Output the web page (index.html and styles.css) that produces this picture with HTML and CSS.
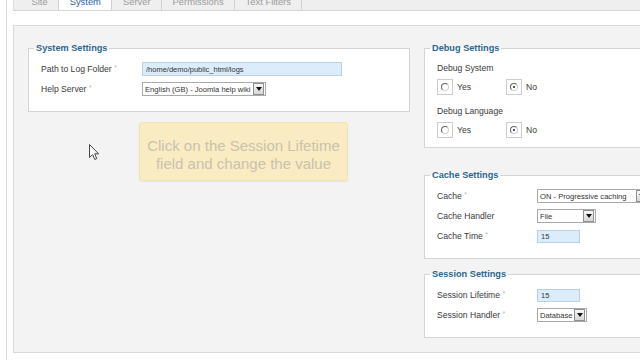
FILE: index.html
```html
<!DOCTYPE html>
<html lang="en">
<head>
  <meta charset="UTF-8">
  <title>Global Configuration - System</title>
  <link rel="stylesheet" href="styles.css">
</head>
<body>
  <div class="page">
    <div class="tabs">
      <span class="tab">Site</span>
      <span class="tab active">System</span>
      <span class="tab">Server</span>
      <span class="tab">Permissions</span>
      <span class="tab">Text Filters</span>
    </div>

    <div class="panel">
      <div class="col">
        <fieldset class="group wide">
          <legend>System Settings</legend>
          <div class="row">
            <label>Path to Log Folder <span class="req">*</span></label>
            <input class="field path" type="text" value="/home/demo/public_html/logs" readonly>
          </div>
          <div class="row">
            <label>Help Server <span class="req">*</span></label>
            <div class="select help"><span class="val">English (GB) - Joomla help wiki</span><span class="arrow"></span></div>
          </div>
        </fieldset>
      </div>

      <div class="col">
        <fieldset class="group debug">
          <legend>Debug Settings</legend>
          <div class="sub">Debug System</div>
          <div class="radios">
            <span class="opt"><span class="box"><span class="radio"></span></span>Yes</span>
            <span class="opt"><span class="box"><span class="radio on"></span></span>No</span>
          </div>
          <div class="sub gap">Debug Language</div>
          <div class="radios">
            <span class="opt"><span class="box"><span class="radio"></span></span>Yes</span>
            <span class="opt"><span class="box"><span class="radio on"></span></span>No</span>
          </div>
        </fieldset>

        <fieldset class="group cache">
          <legend>Cache Settings</legend>
          <div class="row">
            <label>Cache <span class="req">*</span></label>
            <div class="select mode"><span class="val">ON - Progressive caching</span><span class="arrow"></span></div>
          </div>
          <div class="row">
            <label>Cache Handler</label>
            <div class="select file"><span class="val">File</span><span class="arrow"></span></div>
          </div>
          <div class="row">
            <label>Cache Time <span class="req">*</span></label>
            <input class="field short" type="text" value="15" readonly>
          </div>
        </fieldset>

        <fieldset class="group session">
          <legend>Session Settings</legend>
          <div class="row">
            <label>Session Lifetime <span class="req">*</span></label>
            <input class="field short" type="text" value="15" readonly>
          </div>
          <div class="row">
            <label>Session Handler <span class="req">*</span></label>
            <div class="select db"><span class="val">Database</span><span class="arrow"></span></div>
          </div>
        </fieldset>
      </div>

      <div class="tip">Click on the Session Lifetime<br>field and change the value</div>

      <svg class="cursor" width="12" height="18" viewBox="0 0 12 18">
        <path d="M1.5 1.5 L1.5 14.5 L4.6 11.6 L6.8 16.5 L8.8 15.6 L6.7 10.8 L10.6 10.8 Z" fill="#fafafa" stroke="#444" stroke-width="1" stroke-linejoin="round"/>
      </svg>
    </div>
  </div>
</body>
</html>
```

FILE: styles.css
```css
* {
  margin: 0;
  padding: 0;
  box-sizing: border-box;
}

body {
  font-family: 'Liberation Sans', Arial, sans-serif;
  background: #fff;
  color: #3a3a3a;
  width: 640px;
  height: 360px;
  overflow: hidden;
}

.page {
  margin-left: 6px;
  padding-left: 6px;
  border-left: 1px solid #dadada;
  width: 700px;
  height: 380px;
}

/* tabs, cut off at the top of the frame */
.tabs {
  display: flex;
  margin-top: -6px;
  height: 17px;
  padding-left: 7px;
  background: #efefef;
  border-left: 1px solid #dcdcdc;
  border-bottom: 1px solid #d6d6d6;
}

.tab {
  padding: 0 10.5px;
  border-right: 1px solid #d2d2d2;
  font-size: 9.4px;
  line-height: 16px;
  color: #9c9c9c;
}

.tab.active {
  background: #fff;
  color: #2a6597;
}

.panel {
  position: relative;
  margin-top: 14px;
  display: grid;
  grid-template-columns: 382px 250px;
  column-gap: 14px;
  align-items: start;
  padding: 16px 14px 14px;
  background: #f3f3f3;
  border: 1px solid #d8d8d8;
}

.group {
  border: 1px solid #d4d4d4;
  background: #fff;
  padding: 5px 0 12px 5px;
}

.group legend {
  padding: 0 2px;
  font-weight: bold;
  font-size: 9.2px;
  line-height: 12px;
  color: #2b6590;
}

.row {
  display: flex;
  align-items: center;
  height: 20px;
  padding-left: 7px;
}

.row label {
  width: 100px;
  font-size: 8.6px;
}

.wide .row label {
  width: 101px;
}

.req {
  color: #b4b4b4;
  font-size: 7px;
  vertical-align: 2px;
}

.field {
  height: 14px;
  padding: 0 3px;
  border: 1px solid #bcd0e0;
  background: #dbedfb;
  font-family: 'Liberation Sans', Arial, sans-serif;
  font-size: 7.5px;
  color: #333;
  outline: none;
}

.field.path {
  width: 200px;
}

.field.short {
  width: 43px;
  height: 13px;
}

.select {
  display: flex;
  align-items: center;
  height: 14px;
  border: 1px solid #a9a9a9;
  background: #fff;
  font-size: 7.6px;
  color: #333;
}

.select .val {
  flex: 1;
  padding-left: 2px;
  white-space: nowrap;
  overflow: hidden;
}

.select .arrow {
  position: relative;
  width: 11px;
  height: 12px;
  margin-right: 1px;
  background: linear-gradient(#f7f7f7, #d6d6d6);
  border: 1px solid #8f8f8f;
}

.select .arrow::after {
  content: '';
  position: absolute;
  left: 2px;
  top: 3px;
  border-left: 3px solid transparent;
  border-right: 3px solid transparent;
  border-top: 4px solid #111;
}

.select.help { width: 124px; }
.select.mode { width: 112px; }
.select.file { width: 59px; }
.select.db { width: 50px; }

/* debug radios */
.debug {
  padding-bottom: 7px;
}

.sub {
  padding-left: 7px;
  font-size: 8.6px;
  line-height: 18px;
}

.sub.gap {
  margin-top: 5px;
}

.radios {
  display: flex;
  align-items: center;
  height: 20px;
  padding-left: 7px;
  font-size: 8.6px;
}

.opt {
  display: flex;
  align-items: center;
  gap: 4px;
  width: 69px;
}

.box {
  display: flex;
  align-items: center;
  justify-content: center;
  width: 16px;
  height: 16px;
  border: 1px solid #cdcdcd;
  background: #fff;
}

.radio {
  position: relative;
  width: 8px;
  height: 8px;
  border: 1px solid;
  border-color: #666 #d0d0d0 #d0d0d0 #666;
  border-radius: 50%;
}

.radio.on::after {
  content: '';
  position: absolute;
  left: 2px;
  top: 2px;
  width: 2px;
  height: 2px;
  border-radius: 50%;
  background: #222;
}

.cache {
  margin-top: 21px;
}

.session {
  margin-top: 9px;
}

/* hint overlay */
.tip {
  position: absolute;
  left: 125px;
  top: 96px;
  width: 209px;
  height: 59px;
  padding-top: 14px;
  background: #f9ecc3;
  border: 1px solid #f1e2b6;
  border-radius: 3px;
  box-shadow: 0 1px 2px rgba(0, 0, 0, 0.06);
  font-size: 15px;
  line-height: 18px;
  text-align: center;
  color: #c9c2ad;
}

.cursor {
  position: absolute;
  left: 74px;
  top: 117px;
}
```
